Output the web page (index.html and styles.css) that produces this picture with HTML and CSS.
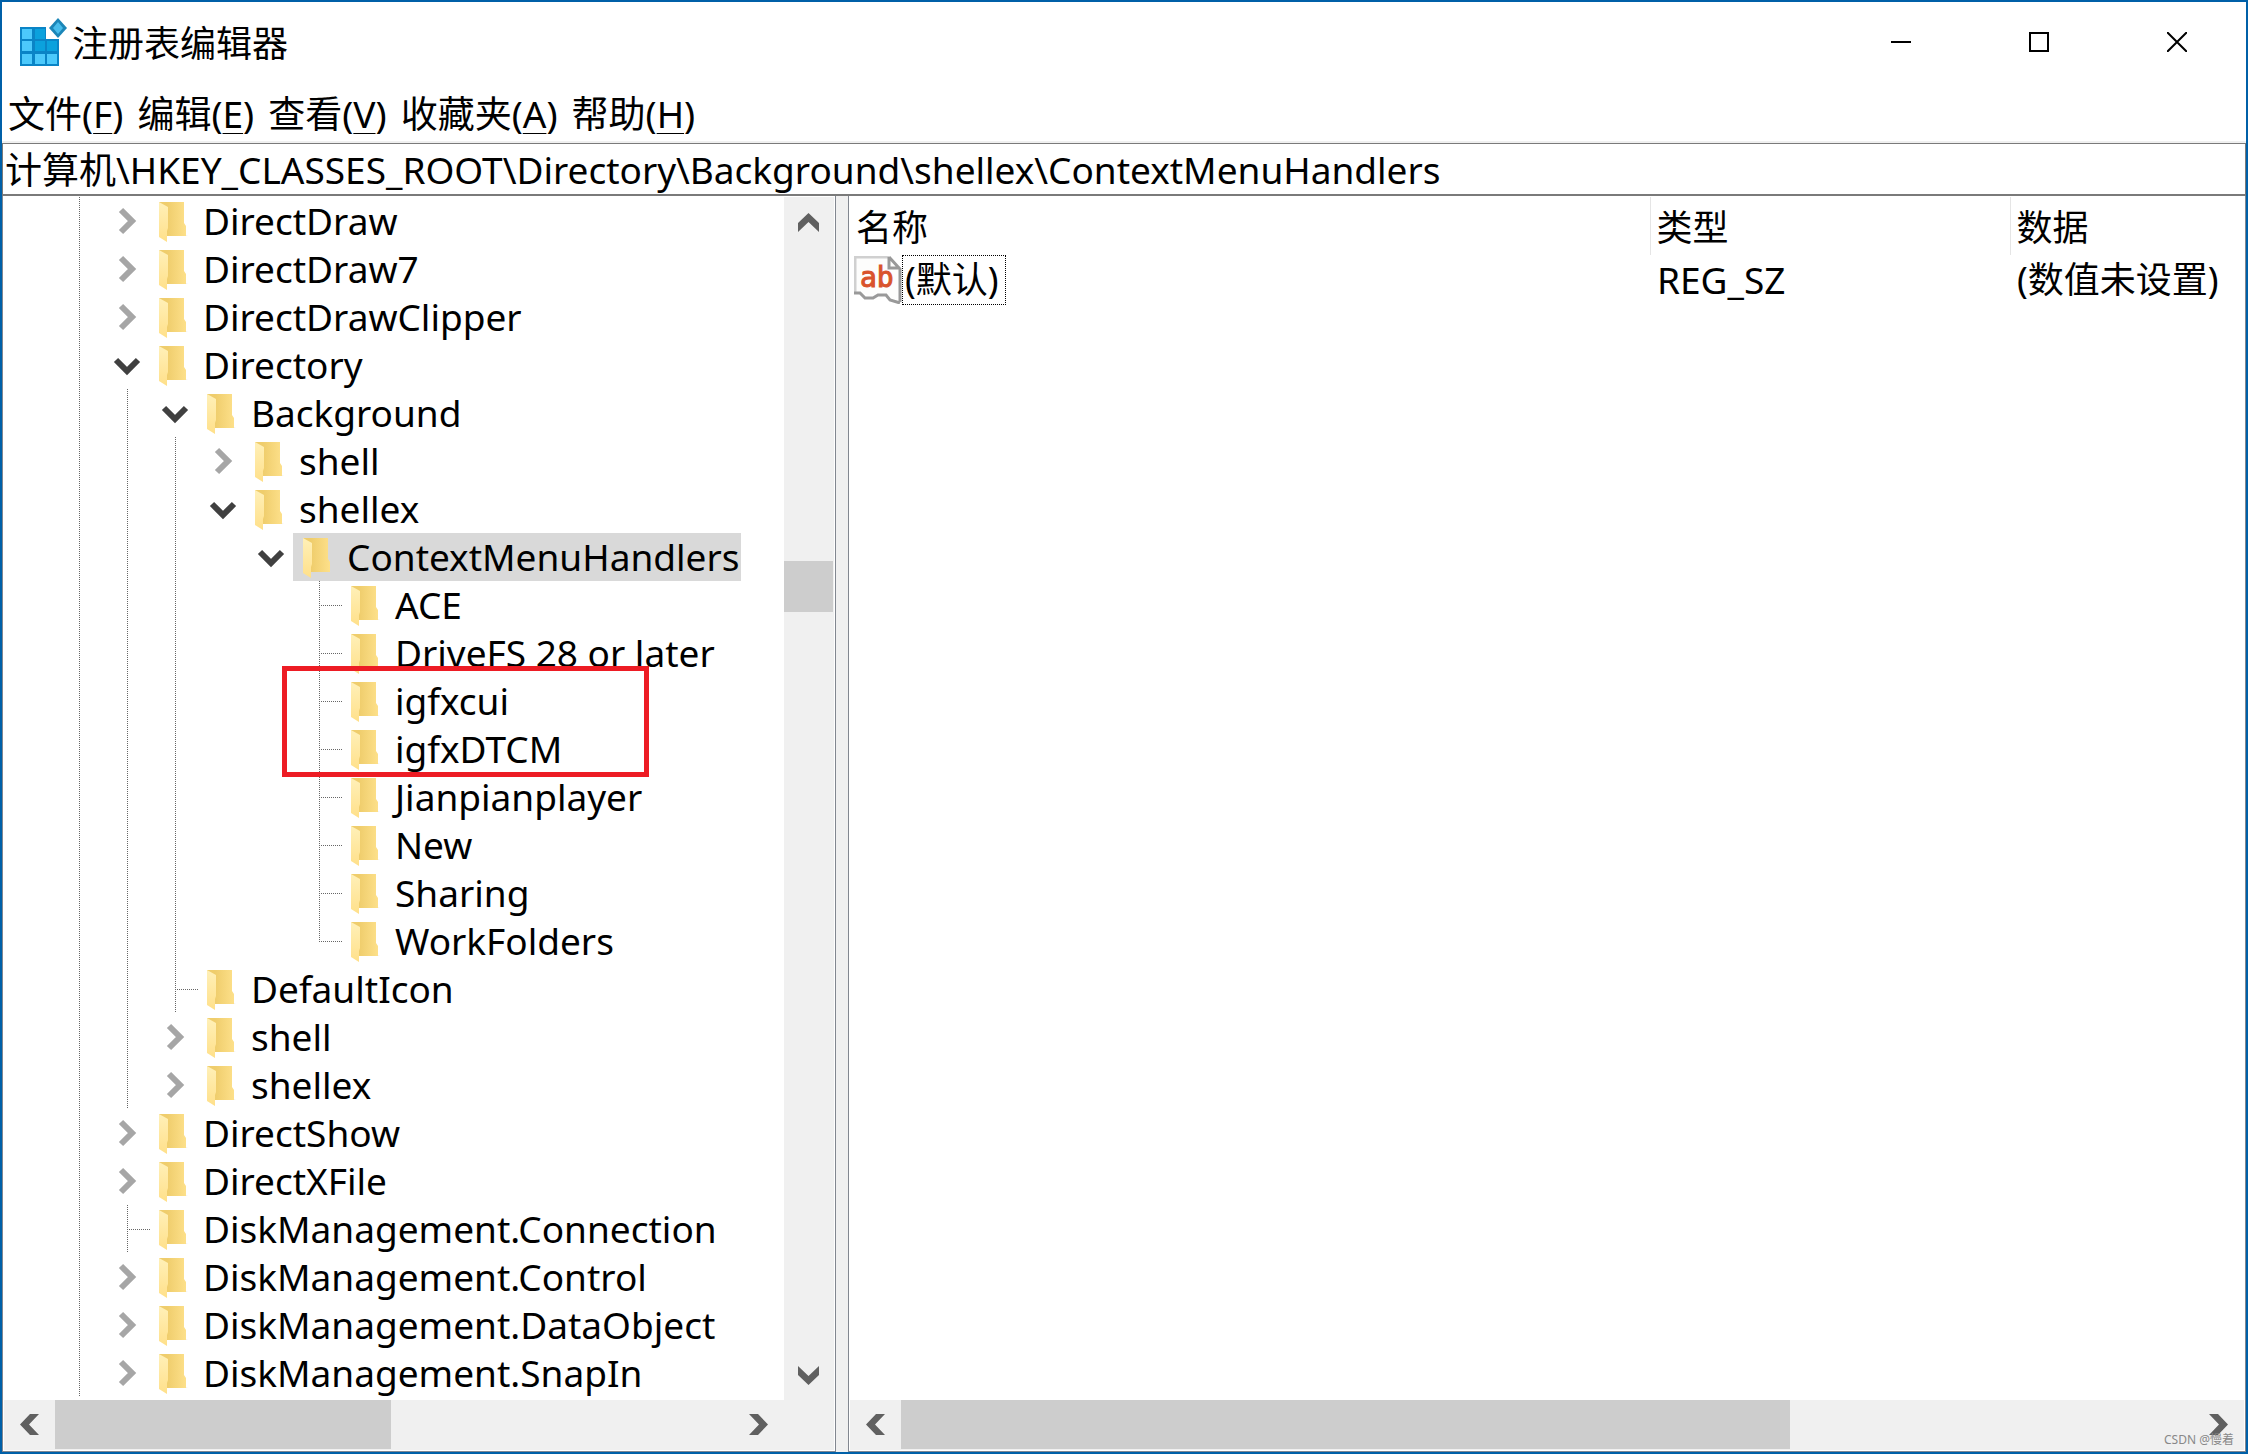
FILE: index.html
```html
<!DOCTYPE html>
<html lang="zh-CN">
<head>
<meta charset="utf-8">
<title>注册表编辑器</title>
<link rel="stylesheet" href="styles.css">
</head>
<body>
<svg class="defs" aria-hidden="true">
  <defs>
    <linearGradient id="back" x1="0" y1="0" x2="1" y2="0"><stop offset="0.3" stop-color="#efcd6c"/><stop offset="1" stop-color="#fde08a"/></linearGradient>
    <linearGradient id="front" x1="0" y1="0" x2="0" y2="1"><stop offset="0" stop-color="#fff0b8"/><stop offset="1" stop-color="#ffe08a"/></linearGradient>
  </defs>
  <symbol id="folder" viewBox="0 0 30 42">
    <path d="M24 33h5l-5 1z" fill="#ddd"/>
    <path d="M0 0h25v21l2 3v10H0z" fill="url(#back)"/>
    <path d="M0 0l9 5v21l-1 3v11L0 35z" fill="url(#front)"/>
  </symbol>
  <symbol id="closed" viewBox="0 0 28 28"><path d="M8 3l11 11L8 25" fill="none" stroke="#a6a6a6" stroke-width="6"/></symbol>
  <symbol id="open" viewBox="0 0 28 28"><path d="M3 9l11 11L25 9" fill="none" stroke="#404040" stroke-width="6"/></symbol>
  <symbol id="arrow" viewBox="0 0 21 19"><path d="M0 10v9L10.500 9 21 19v-9L10.500 0z" fill="#606060"/></symbol>
</svg>
<div class="window">
  <header class="titlebar">
    <svg class="appicon" viewBox="0 0 48 50" aria-hidden="true">
      <path d="M0 9h26v12h13v27H0z" fill="#0a84c6"/>
      <path d="M2 11h10v10H2zM2 23h10v10H2zM2 36h10v10H2zM15 36h10v10H15zM27 36h10v10H27z" fill="#4cc9fb"/>
      <path d="M15 11h10v10H15zM15 23h10v10H15zM27 23h10v10H27z" fill="#0ba1dd"/>
      <path d="M38 0l9 10-9 10-9-10z" fill="#1b86b8"/><path d="M38 4l5 6-5 6-5-6z" fill="#48bdec"/>
    </svg>
    <h1>注册表编辑器</h1>
    <div class="controls">
      <button aria-label="最小化"><svg viewBox="0 0 20 20"><path d="M0 10h20" stroke="#000" stroke-width="2"/></svg></button>
      <button aria-label="最大化"><svg viewBox="0 0 20 20"><path d="M1 1h18v18H1z" fill="none" stroke="#000" stroke-width="2"/></svg></button>
      <button aria-label="关闭"><svg viewBox="0 0 20 20"><path d="M0 0l20 20M20 0L0 20" stroke="#000" stroke-width="2"/></svg></button>
    </div>
  </header>
  <nav class="menubar">
    <button>文件(<u>F</u>)</button><button>编辑(<u>E</u>)</button><button>查看(<u>V</u>)</button><button>收藏夹(<u>A</u>)</button><button>帮助(<u>H</u>)</button>
  </nav>
  <input class="address" aria-label="地址" value="计算机\HKEY_CLASSES_ROOT\Directory\Background\shellex\ContextMenuHandlers">
  <main class="panes">
    <section class="pane treepane">
      <div class="treewrap">
        <ul class="tree" id="tree"></ul>
        <div class="vscroll">
          <button aria-label="向上滚动"><svg><use href="#arrow"/></svg></button>
          <div class="vtrack"><div class="thumb"></div></div>
          <button aria-label="向下滚动"><svg class="down"><use href="#arrow"/></svg></button>
        </div>
      </div>
      <div class="hscroll">
        <button aria-label="向左滚动"><svg class="left"><use href="#arrow"/></svg></button>
        <div class="track"><div class="thumb"></div></div>
        <button aria-label="向右滚动"><svg class="right"><use href="#arrow"/></svg></button>
        <span class="corner"></span>
      </div>
    </section>
    <div class="splitter"></div>
    <section class="pane listpane">
      <div class="listwrap">
        <table>
          <colgroup><col class="c-name"><col class="c-type"><col></colgroup>
          <thead><tr><th>名称</th><th>类型</th><th>数据</th></tr></thead>
          <tbody><tr>
            <td class="name"><div class="entry">
              <svg class="valicon" viewBox="0 0 48 48" aria-hidden="true">
                <path d="M1 1h34l11 12v33l-6-2-4-5-6 1-4 4h-8l-6-6H1z" fill="#fdfdfc"/>
                <path d="M1 37V1h34" fill="none" stroke="#d0d0d0" stroke-width="3"/>
                <path d="M35 1v11h11M35 1l11 12v33M0 37h6l5 5h8l5-3h8l4 5 10 3" fill="none" stroke="#999" stroke-width="3"/>
                <text x="6" y="31">ab</text>
              </svg><span class="focus">(默认)</span></div></td>
            <td class="type">REG_SZ</td><td>(数值未设置)</td>
          </tr></tbody>
        </table>
      </div>
      <div class="hscroll">
        <button aria-label="向左滚动"><svg class="left"><use href="#arrow"/></svg></button>
        <div class="track"><div class="thumb"></div></div>
        <button aria-label="向右滚动"><svg class="right"><use href="#arrow"/></svg></button>
      </div>
    </section>
  </main>
  <span class="watermark">CSDN @慢着</span>
</div>
<script src="tree.js"></script>
</body>
</html>
```
FILE: styles.css
```css
*, *::before, *::after { box-sizing: border-box; }
body { margin: 0; font: 36px/48px "Noto Sans", "Noto Sans CJK SC", sans-serif; color: #000; }
button { border: 0; padding: 0; background: none; font: inherit; color: inherit; display: grid; place-items: center; }
.defs { position: absolute; width: 0; height: 0; }
.window { position: relative; height: 100vh; display: flex; flex-direction: column; border: 2px solid #0060a8; background: #fff; overflow: hidden; }

.titlebar { display: flex; align-items: center; height: 84px; flex: none; padding-left: 18px; }
.appicon { width: 48px; height: 50px; margin-bottom: 2px; }
h1 { margin: 0; padding-left: 4px; font: inherit; }
.controls { display: flex; align-self: flex-start; margin-left: auto; }
.controls button { width: 138px; height: 80px; }
.controls svg { width: 20px; height: 20px; }

.menubar { display: flex; gap: 14px; height: 57px; flex: none; align-items: center; padding-left: 6px; border-bottom: 2px solid #f0f0f0; font-size: 37px; }
.menubar button { display: block; }
.menubar u { text-decoration-thickness: 1px; text-underline-offset: 5px; }
.address { height: 53px; flex: none; border: 1px solid #7a7a7a; border-bottom-width: 2px; padding: 0 2px 2px; font: inherit; font-size: 37px; color: inherit; outline: 0; }

.panes { flex: 1; min-height: 0; display: flex; background: #f0f0f0; }
.pane { display: flex; flex-direction: column; border: 1px solid #828790; border-top: 0; padding: 1px; background: #fff; min-width: 0; }
.treepane { width: 834px; flex: none; }
.splitter { width: 12px; flex: none; cursor: col-resize; }
.listpane { flex: 1; }
.treewrap { flex: 1; min-height: 0; display: flex; }
.tree { flex: 1; min-width: 0; margin: 0; padding: 0 0 0 49px; list-style: none; font-size: 37px; }
.tree li { display: flex; height: 48px; }
.cell { position: relative; width: 48px; flex: none; }
.cell svg { position: absolute; left: 12px; top: 10px; width: 28px; height: 28px; }
.line::before { content: ""; position: absolute; left: 26px; top: 0; width: 1px; height: 48px; background: repeating-linear-gradient(#666 0 1px, #fff 1px 2px); }
.end::before { height: 25px; }
.branch::after { content: ""; position: absolute; left: 26px; top: 24px; width: 23px; height: 1px; background: repeating-linear-gradient(90deg, #666 0 1px, #fff 1px 2px); }
.label { display: flex; padding: 0 2px 0 10px; white-space: nowrap; }
.label svg { width: 30px; height: 42px; margin: 5px 14px 0 0; }
.selected { background: #d9d9d9; }
.mark { position: relative; }
.mark::after { content: ""; position: absolute; z-index: 1; left: 229px; top: -11px; width: 367px; height: 111px; border: 5px solid #ed1c24; }

.vscroll { width: 50px; flex: none; display: flex; flex-direction: column; background: #f0f0f0; padding-right: 1px; }
.vscroll button { height: 50px; }
.vtrack { flex: 1; padding-top: 314px; }
.vtrack .thumb { height: 51px; }
.thumb { background: #cdcdcd; }
.vscroll svg, .hscroll svg { width: 21px; height: 19px; }
.down { transform: rotate(180deg); }
.left { transform: rotate(-90deg); }
.right { transform: rotate(90deg); }
.hscroll { height: 50px; flex: none; display: flex; background: #f0f0f0; padding-bottom: 1px; }
.hscroll button { width: 51px; }
.track { flex: 1; }
.track .thumb { width: 336px; height: 49px; }
.listpane .track .thumb { width: 889px; }
.corner { width: 50px; }

.listwrap { flex: 1; min-height: 0; overflow: hidden; }
table { width: 100%; table-layout: fixed; border-collapse: collapse; }
.c-name { width: 800px; }
.c-type { width: 360px; }
th { height: 58px; font-weight: 400; text-align: left; padding: 3px 7px 0 6px; border-right: 1px solid #e5e5e5; }
th:last-child { border: 0; }
td { padding: 0 7px; height: 50px; white-space: nowrap; }
.type { font-size: 37px; }
.name { padding: 0 4px; }
.entry { display: flex; align-items: center; }
.valicon { width: 48px; height: 48px; flex: none; }
.valicon text { font: 28px "DejaVu Sans Mono", monospace; fill: #d9532c; stroke: #d9532c; stroke-width: 1px; }
.focus { border: 1px dotted #000; padding: 0 6px 0 2px; }
.watermark { position: absolute; right: 12px; bottom: 4px; font-size: 12px; line-height: 16px; color: #888; }
```
FILE: tree.js
```js
// depth, name, state (+ closed, - open, "" leaf), guide columns drawn left of the item
const items = [
  [1, "DirectDraw", "+", [0]],
  [1, "DirectDraw7", "+", [0]],
  [1, "DirectDrawClipper", "+", [0]],
  [1, "Directory", "-", [0]],
  [2, "Background", "-", [0, 1]],
  [3, "shell", "+", [0, 1, 2]],
  [3, "shellex", "-", [0, 1, 2]],
  [4, "ContextMenuHandlers", "-", [0, 1, 2], "selected"],
  [5, "ACE", "", [0, 1, 2, 5]],
  [5, "DriveFS 28 or later", "", [0, 1, 2, 5]],
  [5, "igfxcui", "", [0, 1, 2, 5], "mark"],
  [5, "igfxDTCM", "", [0, 1, 2, 5]],
  [5, "Jianpianplayer", "", [0, 1, 2, 5]],
  [5, "New", "", [0, 1, 2, 5]],
  [5, "Sharing", "", [0, 1, 2, 5]],
  [5, "WorkFolders", "", [0, 1, 2, 5], "last"],
  [2, "DefaultIcon", "", [0, 1, 2]],
  [2, "shell", "+", [0, 1]],
  [2, "shellex", "+", [0, 1]],
  [1, "DirectShow", "+", [0]],
  [1, "DirectXFile", "+", [0]],
  [1, "DiskManagement.Connection", "", [0, 1]],
  [1, "DiskManagement.Control", "+", [0]],
  [1, "DiskManagement.DataObject", "+", [0]],
  [1, "DiskManagement.SnapIn", "+", [0]],
];
document.getElementById("tree").innerHTML = items.map(([depth, name, state, guides, flag]) => {
  let cells = "";
  for (let i = 0; i <= depth; i++) {
    let cls = "cell";
    if (guides.includes(i)) cls += " line";
    if (i === depth && !state) cls += " branch";
    if (i === depth && flag === "last") cls += " end";
    const icon = i === depth && state ? `<svg><use href="#${state === "+" ? "closed" : "open"}"/></svg>` : "";
    cells += `<span class="${cls}">${icon}</span>`;
  }
  return `<li class="${flag === "mark" ? "mark" : ""}">${cells}<span class="label ${flag === "selected" ? "selected" : ""}"><svg><use href="#folder"/></svg>${name}</span></li>`;
}).join("");
```
